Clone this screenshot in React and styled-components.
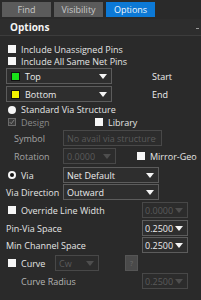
import React from "react";
import styled, { createGlobalStyle, css } from "styled-components";

const Global = createGlobalStyle`
  html, body { margin: 0; padding: 0; background: #2a2a2a; }
  body { font-family: "Open Sans", "Noto Sans", sans-serif; }
  * { box-sizing: border-box; }
`;

const Panel = styled.div`
  width: 201px;
  height: 300px;
  background: #2a2a2a;
  color: #e4e4e4;
  font-size: 9px;
  overflow: hidden;
`;

const TabBar = styled.div`
  display: flex;
  gap: 3px;
  padding: 2px 0 0 2px;
  height: 17px;
`;

const Tab = styled.div`
  width: 49px;
  height: 15px;
  display: flex;
  align-items: center;
  justify-content: center;
  font-size: 9px;
  color: ${(p) => (p.$active ? "#f2f6fb" : "#c8c8c8")};
  background: ${(p) => (p.$active ? "#0c79d6" : "#5b5b5b")};
`;

const Header = styled.div`
  margin-top: 2px;
  height: 17px;
  display: flex;
  align-items: center;
  justify-content: space-between;
  padding: 0 2px 0 10px;
  background: #2d2d2d;
  border-bottom: 1px solid #3c3c3c;
  font-weight: 700;
  font-size: 10px;
  color: #f4f4f4;
`;

const Dash = styled.span`
  width: 3px;
  height: 1px;
  background: #9a9a9a;
  margin-top: 2px;
`;

const Body = styled.div`
  display: flex;
  flex-direction: column;
  padding: 7px 0 0 6px;
`;

const Row = styled.div`
  display: flex;
  align-items: center;
  height: ${(p) => p.$h || 16}px;
  margin-top: ${(p) => p.$mt || 0}px;
  padding-left: ${(p) => p.$pl || 0}px;
`;

const FieldRow = styled.div`
  display: grid;
  grid-template-columns: 57px auto 1fr;
  align-items: center;
  height: 16px;
  margin-top: ${(p) => p.$mt || 0}px;
`;

const NumRow = styled.div`
  display: flex;
  align-items: center;
  justify-content: space-between;
  height: 16px;
  margin-top: ${(p) => p.$mt || 0}px;
  padding-right: 13px;
  padding-left: ${(p) => p.$pl || 0}px;
`;

const Label = styled.span`
  color: ${(p) => p.$color || "#e4e4e4"};
  padding-left: ${(p) => p.$pl || 0}px;
  white-space: nowrap;
`;

const Check = styled.span`
  width: 8px;
  height: 8px;
  margin: 0 5px 0 2px;
  flex: none;
  display: flex;
  align-items: center;
  justify-content: center;
  ${(p) =>
    p.$disabled
      ? css`
          background: #3a3a3a;
          border: 1px solid #6a6a6a;
        `
      : css`
          background: #f6f6f6;
        `}
`;

const Radio = styled.span`
  width: 8px;
  height: 8px;
  border-radius: 50%;
  background: #f6f6f6;
  margin: 0 5px 0 2px;
  flex: none;
  display: flex;
  align-items: center;
  justify-content: center;
  &::after {
    content: "";
    width: 4px;
    height: 4px;
    border-radius: 50%;
    background: ${(p) => (p.$on ? "#111" : "transparent")};
  }
`;

const Select = styled.div`
  width: ${(p) => p.$w}px;
  height: 16px;
  display: flex;
  align-items: center;
  justify-content: space-between;
  padding: 0 ${(p) => p.$pr || 4}px 0 ${(p) => p.$pl || 4}px;
  border: 1px solid ${(p) => (p.$disabled ? "#484848" : "#5c5c5c")};
  background: ${(p) => (p.$disabled ? "#2c2c2c" : "#2e2e2e")};
  color: ${(p) => (p.$disabled ? "#5a5a5a" : "#ececec")};
  white-space: nowrap;
  overflow: hidden;
`;

const ValueText = styled.span`
  display: flex;
  align-items: center;
  gap: 6px;
`;

const Swatch = styled.span`
  width: 7px;
  height: 7px;
  background: ${(p) => p.$color};
  outline: 1px solid #111;
`;

const HelpButton = styled.div`
  width: 13px;
  height: 16px;
  margin-left: 26px;
  background: #4a4a4a;
  border: 1px solid #555;
  color: #6a6a6a;
  font-size: 7px;
  display: flex;
  align-items: center;
  justify-content: center;
`;

const SideLabel = styled.span`
  margin-left: 40px;
  color: #eeeeee;
`;

const Arrow = ({ disabled }) => (
  <svg width="8" height="5" viewBox="0 0 8 5">
    <path d="M0 0 H8 L4 5 Z" fill={disabled ? "#4e4e4e" : "#f4f4f4"} />
  </svg>
);

const Dropdown = ({ w, disabled, children, pl, pr }) => (
  <Select $w={w} $disabled={disabled} $pl={pl} $pr={pr}>
    <ValueText>{children}</ValueText>
    <Arrow disabled={disabled} />
  </Select>
);

const CheckMark = () => (
  <svg width="8" height="8" viewBox="0 0 8 8">
    <path d="M1 4.2 L3 6.3 L7 1" stroke="#9a9a9a" strokeWidth="1" fill="none" />
  </svg>
);

export default function App() {
  return (
    <>
      <Global />
      <Panel>
        <TabBar>
          <Tab>Find</Tab>
          <Tab>Visibility</Tab>
          <Tab $active>Options</Tab>
        </TabBar>
        <Header>
          <span>Options</span>
          <Dash />
        </Header>
        <Body>
          <Row $h={12}>
            <Check />
            <Label>Include Unassigned Pins</Label>
          </Row>
          <Row $h={12}>
            <Check />
            <Label>Include All Same Net Pins</Label>
          </Row>
          <Row $mt={1}>
            <Dropdown w={106} pl={5}>
              <Swatch $color="#19e019" />
              Top
            </Dropdown>
            <SideLabel>Start</SideLabel>
          </Row>
          <Row $mt={2}>
            <Dropdown w={106} pl={5}>
              <Swatch $color="#f2f200" />
              Bottom
            </Dropdown>
            <SideLabel>End</SideLabel>
          </Row>
          <Row $h={13} $mt={1}>
            <Radio />
            <Label>Standard Via Structure</Label>
          </Row>
          <Row $h={12}>
            <Check $disabled>
              <CheckMark />
            </Check>
            <Label $color="#8a8a8a" style={{ width: 72 }}>
              Design
            </Label>
            <Check />
            <Label>Library</Label>
          </Row>
          <FieldRow $mt={2}>
            <Label $pl={8} $color="#a4a4a4">
              Symbol
            </Label>
            <Dropdown w={99} disabled pl={3}>
              No avail via structure
            </Dropdown>
          </FieldRow>
          <FieldRow $mt={2}>
            <Label $pl={8} $color="#a4a4a4">
              Rotation
            </Label>
            <Dropdown w={53} disabled pl={3}>
              0.0000
            </Dropdown>
            <Row>
              <Check style={{ marginLeft: 21 }} />
              <Label>Mirror-Geo</Label>
            </Row>
          </FieldRow>
          <FieldRow $mt={3}>
            <Row>
              <Radio $on />
              <Label>Via</Label>
            </Row>
            <Dropdown w={96} pl={3}>
              Net Default
            </Dropdown>
          </FieldRow>
          <FieldRow $mt={1}>
            <Label>Via Direction</Label>
            <Dropdown w={96} pl={3}>
              Outward
            </Dropdown>
          </FieldRow>
          <NumRow $mt={2}>
            <Row>
              <Check />
              <Label>Override Line Width</Label>
            </Row>
            <Dropdown w={46} disabled pl={2}>
              0.0000
            </Dropdown>
          </NumRow>
          <NumRow $mt={2}>
            <Label>Pin-Via Space</Label>
            <Dropdown w={46} pl={2}>
              0.2500
            </Dropdown>
          </NumRow>
          <NumRow $mt={1}>
            <Label>Min Channel Space</Label>
            <Dropdown w={46} pl={2}>
              0.2500
            </Dropdown>
          </NumRow>
          <Row $mt={2}>
            <Check />
            <Label style={{ width: 34 }}>Curve</Label>
            <Dropdown w={44} disabled pl={3}>
              Cw
            </Dropdown>
            <HelpButton>?</HelpButton>
          </Row>
          <NumRow $mt={2} $pl={15}>
            <Label $color="#b4b4b4">Curve Radius</Label>
            <Dropdown w={46} disabled pl={2}>
              0.2500
            </Dropdown>
          </NumRow>
        </Body>
      </Panel>
    </>
  );
}
